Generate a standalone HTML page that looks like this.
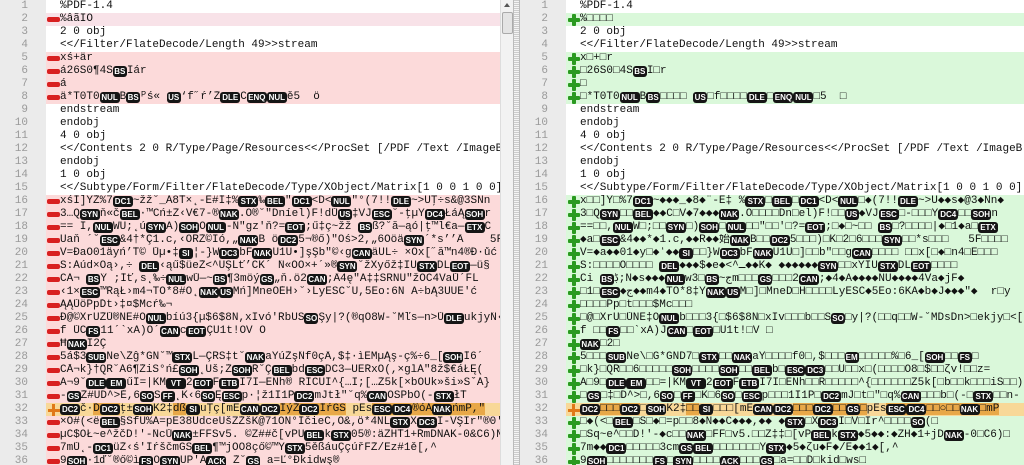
<!DOCTYPE html>
<html><head><meta charset="utf-8">
<style>
*{margin:0;padding:0;box-sizing:border-box}
body{width:1024px;height:465px;overflow:hidden;background:#fff;font-family:"Liberation Mono","DejaVu Sans Mono",monospace;font-size:11px;color:#111;position:relative}
.pane{position:absolute;top:0;height:465px;overflow:hidden}
#L{left:0;width:500px}
#R{left:520px;width:504px}
.g{position:absolute;left:0;top:0;width:46px;height:465px;background:#ebebeb;z-index:1}
.r{position:relative;height:13px;line-height:13px;white-space:pre;overflow:hidden}
.n{position:absolute;left:0;width:28px;text-align:right;color:#9a9a9a;font-size:11px;z-index:2}
.t{position:absolute;left:60px;top:0}
.d{background:#fcdada}
.d2{background:#f8e2e8}
.a{background:#daf8da}
.o{background:#f8d898}
.o b{font-weight:normal;background:#e8a848}
.m{position:absolute;left:47px;top:4px;width:13px;height:5px;background:#d82020;border-radius:2px;z-index:2}
.p{position:absolute;left:48px;top:1px;width:12px;height:12px;z-index:2}
.p:before{content:"";position:absolute;left:4px;top:0;width:4px;height:12px;background:#2a9a20;border-radius:1px}
.p:after{content:"";position:absolute;left:0;top:4px;width:12px;height:4px;background:#2a9a20;border-radius:1px}
.q{position:absolute;left:48px;top:1px;width:12px;height:12px;z-index:2}
.q:before{content:"";position:absolute;left:4px;top:0;width:3px;height:12px;background:#e07818}
.q:after{content:"";position:absolute;left:0;top:5px;width:12px;height:3px;background:#e07818}
.c{display:inline-block;background:#151515;color:#fff;border-radius:3px;font-family:"Liberation Sans",sans-serif;font-weight:bold;font-size:8px;line-height:11px;height:11px;text-align:center;vertical-align:top;margin-top:1px;width:20px;overflow:hidden}
.c2{width:14px}
#sb{position:absolute;left:500px;top:0;width:13px;height:465px;background:#f2f2f2;border-left:1px solid #ddd}
#sb .th{position:absolute;left:1px;top:12px;width:11px;height:22px;background:#e4e4e4;border:1px solid #aaa;border-radius:2px}
#sb .ar{position:absolute;left:3px;top:3px;width:0;height:0;border-left:3px solid transparent;border-right:3px solid transparent;border-bottom:4px solid #555}
#dv{position:absolute;left:513px;top:0;width:7px;height:465px;background:repeating-linear-gradient(#ccc 0 1px,#f4f4f4 1px 2px);border-left:1px solid #bbb;border-right:1px solid #bbb}
</style></head><body>
<div class="pane" id="L"><div class="g"></div>
<div class="r"><span class="n">1</span><span class="t">%PDF-1.4</span></div>
<div class="r d2"><span class="n">2</span><i class="m"></i><span class="t">%âãÏÓ</span></div>
<div class="r"><span class="n">3</span><span class="t">2 0 obj</span></div>
<div class="r"><span class="n">4</span><span class="t">&lt;&lt;/Filter/FlateDecode/Length 49&gt;&gt;stream</span></div>
<div class="r d"><span class="n">5</span><i class="m"></i><span class="t">xś+är</span></div>
<div class="r d"><span class="n">6</span><i class="m"></i><span class="t">á26S0¶4S<span class="c c2">BS</span>Iár</span></div>
<div class="r d"><span class="n">7</span><i class="m"></i><span class="t">á</span></div>
<div class="r d"><span class="n">8</span><i class="m"></i><span class="t">ä*T0T0<span class="c">NUL</span>B<span class="c c2">BS</span>ᴾś« <span class="c c2">US</span>‘f˝ŕ’Ž<span class="c">DLE</span>Č<span class="c">ENQ</span><span class="c">NUL</span>ě5  ö</span></div>
<div class="r"><span class="n">9</span><span class="t">endstream</span></div>
<div class="r"><span class="n">10</span><span class="t">endobj</span></div>
<div class="r"><span class="n">11</span><span class="t">4 0 obj</span></div>
<div class="r"><span class="n">12</span><span class="t">&lt;&lt;/Contents 2 0 R/Type/Page/Resources&lt;&lt;/ProcSet [/PDF /Text /ImageB</span></div>
<div class="r"><span class="n">13</span><span class="t">endobj</span></div>
<div class="r"><span class="n">14</span><span class="t">1 0 obj</span></div>
<div class="r"><span class="n">15</span><span class="t">&lt;&lt;/Subtype/Form/Filter/FlateDecode/Type/XObject/Matrix[1 0 0 1 0 0].</span></div>
<div class="r d"><span class="n">16</span><i class="m"></i><span class="t">xśÍ]YŽ%7<span class="c">DC1</span>~žž˘_Ă8Ť×˛-E#Í‡%<span class="c">STX</span>‰<span class="c">BEL</span>"<span class="c">DC1</span>&lt;D&lt;<span class="c">NUL</span>"°(7!!<span class="c">DLE</span>~&gt;UŢ÷s&amp;@3ŚNn</span></div>
<div class="r d"><span class="n">17</span><i class="m"></i><span class="t">3…Q<span class="c">SYN</span>ň«č<span class="c">BEL</span>·™Čń±Ž‹V€7-®<span class="c">NAK</span>.O®˘"Dníel)F!dŮ<span class="c c2">US</span>‡VJ<span class="c">ESC</span>˘-ţµY<span class="c">DC4</span>ŁáĄ<span class="c">SOH</span>r</span></div>
<div class="r d"><span class="n">18</span><i class="m"></i><span class="t">== I,<span class="c">NUL</span>WŰ;˛ú<span class="c">SYN</span>Ä)<span class="c">SOH</span>Ó<span class="c">NUL</span>-Ń"gz'ň?=<span class="c">EOT</span>;ű‡ç~žž <span class="c c2">BS</span>ß?˘ă—ąó|ţ™l€a—<span class="c">ETX</span>Ć</span></div>
<div class="r d"><span class="n">19</span><i class="m"></i><span class="t">Üaň ´˘<span class="c">ESC</span>&amp;4†*Ç1.c,‹ÔRŽ©Ió,„<span class="c">NAK</span>B ö<span class="c">DC2</span>5¬®ő)"Óś&gt;2,„6Ööä<span class="c">SYN</span>´*s’’Â    5Fj.</span></div>
<div class="r d"><span class="n">20</span><i class="m"></i><span class="t">V=ĐaÓ01äyń’Ť© Ůµ•‡<span class="c c2">SI</span>¦-}W<span class="c">DC3</span>bF<span class="c">NAK</span>Ú1U•]şŞb"©‹g<span class="c">CAN</span>äUL÷ ×Öx[˝ă™n4®Đ·ůć</span></div>
<div class="r d"><span class="n">21</span><i class="m"></i><span class="t">S:Áúd×Oą›,÷ <span class="c">DEL</span>‹ąű$üeŽ&lt;^ÚŞĹť’ĆK´ Ň«ÓO×+´»®<span class="c">SYN</span>˘žXyőž‡IU<span class="c">STX</span>DL<span class="c">EOT</span>—ü§</span></div>
<div class="r d"><span class="n">22</span><i class="m"></i><span class="t">CĂ¬ <span class="c c2">BS</span>Ý ;Íť,s˛‰÷<span class="c">NUL</span>wŮ—~<span class="c c2">BS</span>¶3möý<span class="c c2">GS</span>„ň.ö2<span class="c">CAN</span>;Â4ę"A‡‡ŚRNU"žÖĆ4VaŮ´FĹ</span></div>
<div class="r d"><span class="n">23</span><i class="m"></i><span class="t">‹1×<span class="c">ESC</span>™ŘąŁ›m4¬TO*8#Ó˛<span class="c">NAK</span><span class="c c2">US</span>Mń]MneÔĚH›˘›LyESC˘Ű,5Eo:6N A÷bĄ3ÚŰE'ć</span></div>
<div class="r d"><span class="n">24</span><i class="m"></i><span class="t">ĄĄŮöPpĎt›‡¤$Mcŕ‰¬</span></div>
<div class="r d"><span class="n">25</span><i class="m"></i><span class="t">Đ@©XrUŽŮ®NE#O<span class="c">NUL</span>bíú3{µ$6$8N,xIvó'ŘbÚS<span class="c c2">SO</span>Şy|?(®qÖ8W-˘Mľs—n&gt;Ů<span class="c">DLE</span>ukjyŃ‹[ě</span></div>
<div class="r d"><span class="n">26</span><i class="m"></i><span class="t">f ŮĈ<span class="c c2">FS</span>11´`xA)Ô´<span class="c">CAN</span>c<span class="c">EOT</span>ÇU1t!ÓV Ö</span></div>
<div class="r d"><span class="n">27</span><i class="m"></i><span class="t">Ħ<span class="c">NAK</span>Ī2Ç</span></div>
<div class="r d"><span class="n">28</span><i class="m"></i><span class="t">5á$3<span class="c">SUB</span>Ne\Žĝ*GN˘™<span class="c">STX</span>Ĺ—ÇRS‡t˘<span class="c">NAK</span>aYúŽşŃf0çÂ,$‡·ìEMµĄş-ç%÷6_[<span class="c">SOH</span>Í6´</span></div>
<div class="r d"><span class="n">29</span><i class="m"></i><span class="t">CÅ¬k}†QR˘Á6¶ŽiŠ°ń£<span class="c">SOH</span>˛Úš;Ž<span class="c">SOH</span>Ř˘Ç<span class="c">BEL</span>bd<span class="c">ESC</span>DC3—UEŘxÔ(,×gĺÁ"8ž$€áŁĘ(</span></div>
<div class="r d"><span class="n">30</span><i class="m"></i><span class="t">A¬9˘<span class="c">DLE</span><span class="c">EM</span>űÎ=|KM<span class="c">VT</span>2<span class="c">EOT</span>F<span class="c">ETB</span>I7I—ENh® RÍČÜÍ^{…I;[…Ž5k[×bÔŰk»ši»SˇÁ}</span></div>
<div class="r d"><span class="n">31</span><i class="m"></i><span class="t">-<span class="c c2">GS</span>Ž#ŰD^&gt;Ě,6<span class="c c2">SO</span>Š<span class="c c2">FF</span>˛K‹6<span class="c c2">SO</span>Ę<span class="c">ESC</span>p·¦ž1I1P<span class="c">DC2</span>mJtł"˘q%<span class="c">CAN</span>ÓŠPbÓ(-<span class="c">STX</span>łŤ</span></div>
<div class="r o"><span class="n">32</span><i class="q"></i><span class="t"><span class="c">DC2</span>č·<b>Ď<span class="c">DC2</span></b>ţ±<span class="c">SOH</span>K2‡<b>dß</b><span class="c c2">SI</span>uŢç[mE<span class="c">CAN</span><span class="c">DC2</span><b>ÍýŽ<span class="c">DC2</span>ÍŕGS</b> pEs<b><span class="c">ESC</span><span class="c">DC4</span>®óÁ<span class="c">NAK</span>ńmP,"</b></span></div>
<div class="r d"><span class="n">33</span><i class="m"></i><span class="t">×Ô#(&lt;ë<span class="c">BEL</span>§SfŰ%Ă=pË38ÚdceŰšZŽšK@71ÓN°ÍčieĆ,Ö&amp;,ö*4NĹ<span class="c">STX</span>X<span class="c">DC3</span>I-VŞIr"®0'"</span></div>
<div class="r d"><span class="n">34</span><i class="m"></i><span class="t">µĆ$ÖŁ~e^žčD!'-ŇcŮ<span class="c">NAK</span>±FFŚv5. ©Z##č[vPÜ<span class="c">BEL</span>k<span class="c">STX</span>05®:äZHŤ1+ŘmDNAK-0&amp;C6)Ň</span></div>
<div class="r d"><span class="n">35</span><i class="m"></i><span class="t">7mŮ˛-<span class="c">DC1</span>üŽ‹ś'ÍŕščmGS<span class="c">BEL</span>¶™jÓÖ8çő©™Y<span class="c">STX</span>5ěßáuÇçúřFŽ/Ez#1ě[,^</span></div>
<div class="r d"><span class="n">36</span><i class="m"></i><span class="t">9<span class="c">SOH</span>·1ď˘®ő©ì<span class="c c2">FS</span>O<span class="c">SYN</span>ÜP'Ă<span class="c">ACK</span> Ž˘<span class="c c2">GS</span> a=Ľ°Đkidwş®</span></div>
</div>
<div id="sb"><i class="ar"></i><div class="th"></div></div>
<div id="dv"></div>
<div class="pane" id="R"><div class="g"></div>
<div class="r"><span class="n">1</span><span class="t">%PDF-1.4</span></div>
<div class="r a"><span class="n">2</span><i class="p"></i><span class="t">%□□□□</span></div>
<div class="r"><span class="n">3</span><span class="t">2 0 obj</span></div>
<div class="r"><span class="n">4</span><span class="t">&lt;&lt;/Filter/FlateDecode/Length 49&gt;&gt;stream</span></div>
<div class="r a"><span class="n">5</span><i class="p"></i><span class="t">x□+□r</span></div>
<div class="r a"><span class="n">6</span><i class="p"></i><span class="t">□26S0□4S<span class="c c2">BS</span>I□r</span></div>
<div class="r a"><span class="n">7</span><i class="p"></i><span class="t">□</span></div>
<div class="r a"><span class="n">8</span><i class="p"></i><span class="t">□*T0T0<span class="c">NUL</span>B<span class="c c2">BS</span>□□□□ <span class="c c2">US</span>□f□□□□<span class="c">DLE</span>□<span class="c">ENQ</span><span class="c">NUL</span>□5  □</span></div>
<div class="r"><span class="n">9</span><span class="t">endstream</span></div>
<div class="r"><span class="n">10</span><span class="t">endobj</span></div>
<div class="r"><span class="n">11</span><span class="t">4 0 obj</span></div>
<div class="r"><span class="n">12</span><span class="t">&lt;&lt;/Contents 2 0 R/Type/Page/Resources&lt;&lt;/ProcSet [/PDF /Text /ImageB</span></div>
<div class="r"><span class="n">13</span><span class="t">endobj</span></div>
<div class="r"><span class="n">14</span><span class="t">1 0 obj</span></div>
<div class="r"><span class="n">15</span><span class="t">&lt;&lt;/Subtype/Form/Filter/FlateDecode/Type/XObject/Matrix[1 0 0 1 0 0]</span></div>
<div class="r a"><span class="n">16</span><i class="p"></i><span class="t">x□□]Y□%7<span class="c">DC1</span>~◆◆◆_◆8◆¨-E‡¯%<span class="c">STX</span>□<span class="c">BEL</span>□<span class="c">DC1</span>&lt;D&lt;<span class="c">NUL</span>□◆(7!!<span class="c">DLE</span>~&gt;U◆◆s◆@3◆Nn◆</span></div>
<div class="r a"><span class="n">17</span><i class="p"></i><span class="t">3□Q<span class="c">SYN</span>□□<span class="c">BEL</span>◆◆C□V◆7◆◆◆<span class="c">NAK</span>.O□□□□Dn□el)F!□□<span class="c c2">US</span>◆VJ<span class="c">ESC</span>□-□□□Y<span class="c">DC4</span>□□<span class="c">SOH</span>n</span></div>
<div class="r a"><span class="n">18</span><i class="p"></i><span class="t">==□□,<span class="c">NUL</span>W□;□□<span class="c">SYN</span>□)<span class="c">SOH</span>□<span class="c">NUL</span>□□"□□'□?=<span class="c">EOT</span>;□◆□~□□ <span class="c c2">BS</span>□?□□□□|◆□1◆a□<span class="c">ETX</span></span></div>
<div class="r a"><span class="n">19</span><i class="p"></i><span class="t">◆a□<span class="c">ESC</span>&amp;4◆◆*◆1.c,◆◆R◆◆始<span class="c">NAK</span>B□□<span class="c">DC2</span>5□□□)□K□2□6□□□<span class="c">SYN</span>□□*s□□□   5F□□□□</span></div>
<div class="r a"><span class="n">20</span><i class="p"></i><span class="t">V=◆a◆◆01◆y□◆ʻ◆◆<span class="c c2">SI</span>□□}W<span class="c">DC3</span>bF<span class="c">NAK</span>U1U□]□□b"□□g<span class="c">CAN</span>□□□□ □□x[□◆□n4□E□□□</span></div>
<div class="r a"><span class="n">21</span><i class="p"></i><span class="t">S:□□□□O□□□□ <span class="c">DEL</span>◆◆◆$◆e◆&lt;^ـ◆◆K◆ ◆◆◆◆◆◆<span class="c">SYN</span>□□xYIU<span class="c">STX</span>DL<span class="c">EOT</span>□□□□</span></div>
<div class="r a"><span class="n">22</span><i class="p"></i><span class="t">Ci <span class="c c2">BS</span>ڋ;N◆s◆◆◆<span class="c">NUL</span>wج~<span class="c c2">BS</span>□3m□□□<span class="c c2">GS</span>□□□2<span class="c">CAN</span>;◆4◆A◆◆◆◆NU◆◆◆◆4Va◆jF◆</span></div>
<div class="r a"><span class="n">23</span><i class="p"></i><span class="t">□1□<span class="c">ESC</span>◆ج◆◆m4◆TO*8‡Ÿ<span class="c">NAK</span><span class="c c2">US</span>M□]□MneD□H□□□□LyESC◆5Eo:6KA◆b◆J◆◆◆"◆  r□y</span></div>
<div class="r a"><span class="n">24</span><i class="p"></i><span class="t">□□□□Pp□t□□□$Mc□□□</span></div>
<div class="r a"><span class="n">25</span><i class="p"></i><span class="t">□@□XrU□ŮNE‡O<span class="c">NUL</span>b□□□3{□$6$8N□xIv□□□b□□S<span class="c c2">SO</span>□y|?(□□q□□W-˘MDsDn&gt;□ekjy□&lt;[</span></div>
<div class="r a"><span class="n">26</span><i class="p"></i><span class="t">f □□<span class="c c2">FS</span>□□`xA)J<span class="c">CAN</span>□<span class="c">EOT</span>□U1t!□V □</span></div>
<div class="r a"><span class="n">27</span><i class="p"></i><span class="t"><span class="c">NAK</span>□2□</span></div>
<div class="r a"><span class="n">28</span><i class="p"></i><span class="t">5□□□<span class="c">SUB</span>Ne\□G*GND7□<span class="c">STX</span>□□<span class="c">NAK</span>aY□□□□f0□,$□□□<span class="c c2">EM</span>□□□□□%□6_[<span class="c">SOH</span>□□<span class="c c2">FS</span>□</span></div>
<div class="r a"><span class="n">29</span><i class="p"></i><span class="t">□k}□QR□□6□□□□□<span class="c">SOH</span>□□□□<span class="c">SOH</span>□□<span class="c">BEL</span>b□<span class="c">ESC</span><span class="c">DC3</span>□□U□□x□(□□□□Ó8□$□□ζv!□□z=</span></div>
<div class="r a"><span class="n">30</span><i class="p"></i><span class="t">A□9□<span class="c">DLE</span><span class="c">EM</span>□□=|KM<span class="c">VT</span>2<span class="c">EOT</span>F<span class="c">ETB</span>I7I□ENh□□R□□□□□^{□□□□□□Z5k[□b□□k□□□iS□□)</span></div>
<div class="r a"><span class="n">31</span><i class="p"></i><span class="t">□<span class="c c2">GS</span>□‡□D^&gt;□,6<span class="c c2">SO</span>□<span class="c c2">FF</span>□K□6<span class="c c2">SO</span>□<span class="c">ESC</span>p□□□1I1P□<span class="c">DC2</span>mJ□t□"□q%<span class="c">CAN</span>□□□b□(-□<span class="c">STX</span>□□n-</span></div>
<div class="r o"><span class="n">32</span><i class="q"></i><span class="t"><span class="c">DC2</span><b>□□□<span class="c">DC2</span></b>□<span class="c">SOH</span>K2‡<b>□□</b><span class="c c2">SI</span>□□□[mE<span class="c">CAN</span><span class="c">DC2</span><b>□□□<span class="c">DC2</span>□□<span class="c c2">GS</span>□</b>pEs<b><span class="c">ESC</span><span class="c">DC4</span>□□○□□<span class="c">NAK</span>□mP</b></span></div>
<div class="r a"><span class="n">33</span><i class="p"></i><span class="t">□◆(&lt;□<span class="c">BEL</span>□S□◆□=p□□8◆N◆◆C◆◆◆,◆◆ ◆<span class="c">STX</span>□X<span class="c">DC3</span>I□V□Ir^□□□□<span class="c c2">SO</span>(□</span></div>
<div class="r a"><span class="n">34</span><i class="p"></i><span class="t">□Sq~e^□□D!'-◆c□□<span class="c">NAK</span>□FF□v5.□□Z‡‡□[vP<span class="c">BEL</span>k<span class="c">STX</span>◆5◆◆:◆ZH◆1+jD<span class="c">NAK</span>-0□C6)□</span></div>
<div class="r a"><span class="n">35</span><i class="p"></i><span class="t">7m◆◆<span class="c">DC1</span>□□□□□3cm<span class="c c2">GS</span><span class="c">BEL</span>□□□□□□□Y<span class="c">STX</span>◆5◆ζu◆F◆/E◆◆1◆[,^</span></div>
<div class="r a"><span class="n">36</span><i class="p"></i><span class="t">9<span class="c">SOH</span>□□□□□□□<span class="c c2">FS</span>□<span class="c">SYN</span>□□□□<span class="c">ACK</span>□□□<span class="c c2">GS</span>□a=□□D□kid□ws□</span></div>
</div>
</body></html>
